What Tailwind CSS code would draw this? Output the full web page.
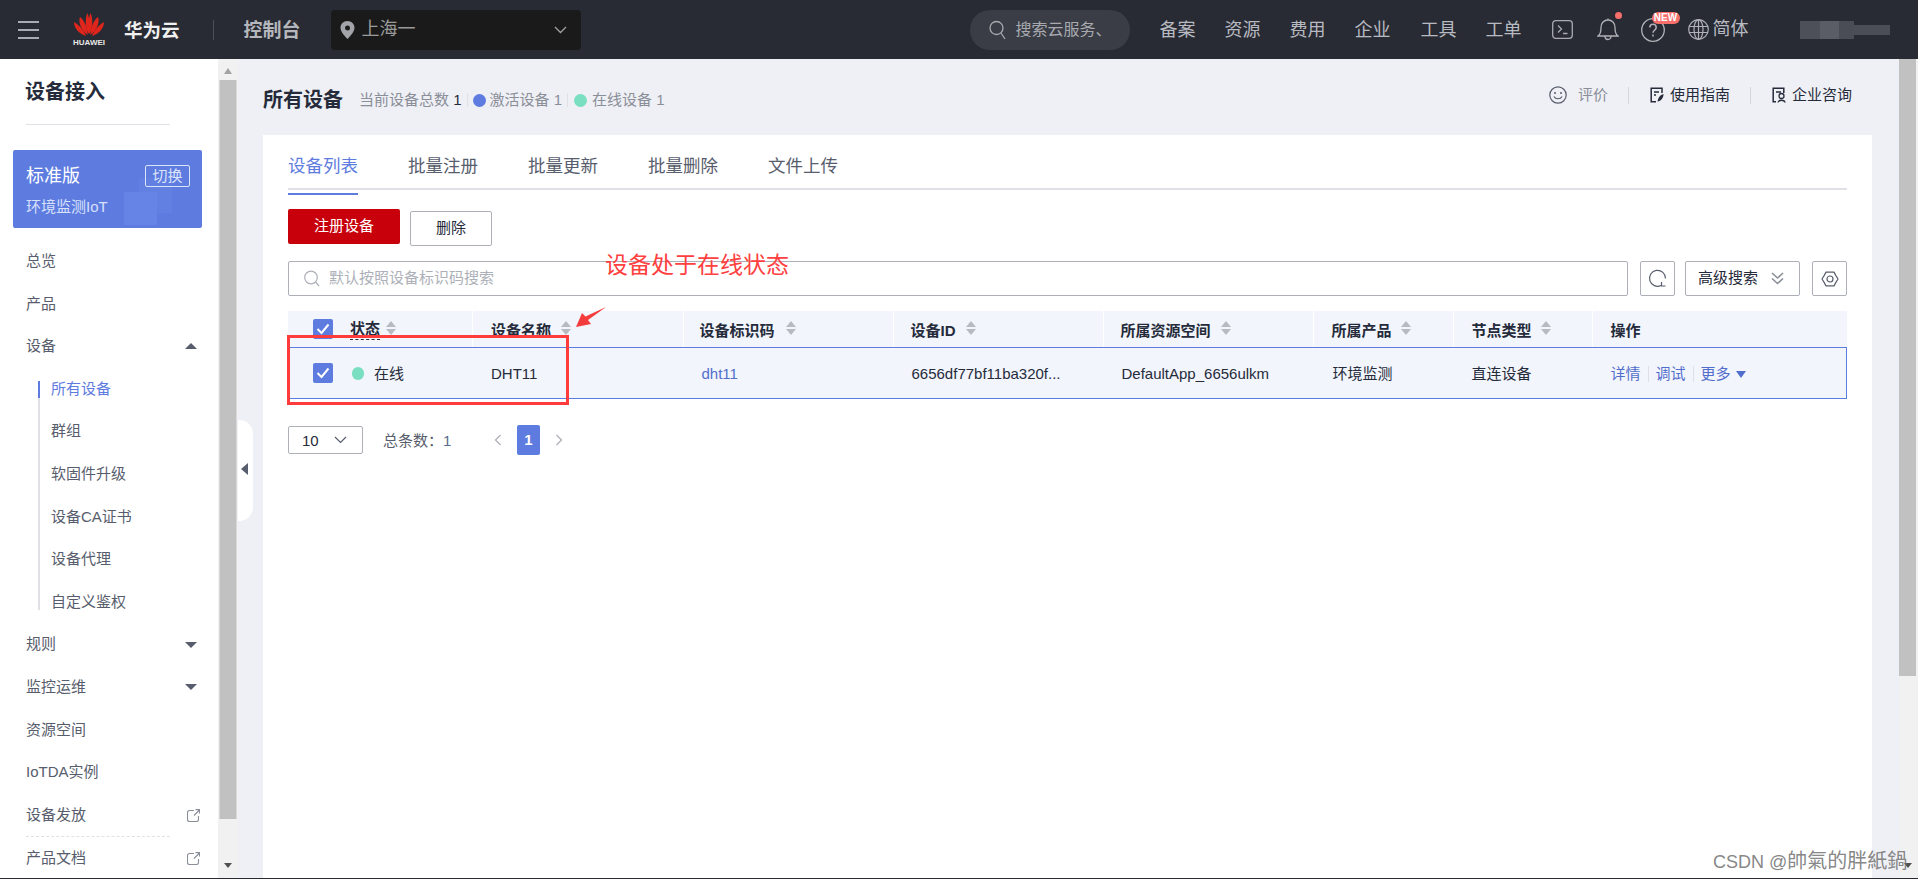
<!doctype html>
<html lang="zh">
<head>
<meta charset="utf-8">
<script src="https://cdn.jsdelivr.net/npm/@tailwindcss/browser@4"></script>
</head>
<body class="m-0 overflow-hidden bg-[#eff0f5] font-['Liberation_Sans','Noto_Sans_CJK_SC',sans-serif] text-[#252b3a]">
<div class="relative flex h-[879px] w-[1918px] flex-col overflow-hidden">
  <header class="flex h-[59px] shrink-0 items-center bg-[#282b33] text-[#b8bac1]">
    <div class="ml-[18px] flex h-[18px] w-[21px] flex-col justify-between">
      <span class="h-[2px] bg-[#a9abb2]"></span><span class="h-[2px] bg-[#a9abb2]"></span><span class="h-[2px] bg-[#a9abb2]"></span>
    </div>
    <div class="ml-[34px] flex w-[32px] flex-col items-center">
      <svg width="32" height="25" viewBox="0 0 32 25"><g fill="#e0261c"><path d="M13 24 C6 22 1 16 1 10 C5 12 11 18 13 24Z"/><path d="M14.5 23 C8 18 5 10 7 5 C11 8 15 16 14.5 23Z"/><path d="M15.6 22 C12 15 12 6 14.5 1 C16 5 18 14 15.6 22Z"/><path d="M16.4 22 C14 14 16 5 17.5 1 C20 6 20 15 16.4 22Z"/><path d="M17.5 23 C17 16 21 8 25 5 C27 10 24 18 17.5 23Z"/><path d="M19 24 C21 18 27 12 31 10 C31 16 26 22 19 24Z"/></g></svg>
      <span class="mt-[2px] text-[8px] leading-[8px] font-bold whitespace-nowrap text-[#e8e8e8]">HUAWEI</span>
    </div>
    <span class="ml-[19px] pt-[2px] text-[18.5px] font-bold text-[#f0f0f0]">华为云</span>
    <span class="ml-[33px] h-[20px] w-px bg-[#4c4f57]"></span>
    <span class="ml-[30px] pt-[3px] text-[19px] font-bold text-[#b5b7bd]">控制台</span>
    <div class="ml-[30px] flex h-[40px] w-[250px] items-center rounded bg-[#1a1a1a] pl-[9px] pr-[14px]">
      <svg width="15" height="18" viewBox="0 0 15 18"><path fill="#a2a4aa" fill-rule="evenodd" d="M7.5 0C3.4 0 .5 3 .5 6.8c0 4 4.5 8.7 7 11.2 2.5-2.5 7-7.2 7-11.2C14.5 3 11.6 0 7.5 0Zm0 4.5a2.5 2.5 0 1 1 0 5 2.5 2.5 0 0 1 0-5Z"/></svg>
      <span class="ml-[7px] flex-1 text-[18px] text-[#9a9a9a]">上海一</span>
      <svg width="13" height="8" viewBox="0 0 13 8"><path d="M1 1l5.5 5.5L12 1" fill="none" stroke="#a0a0a0" stroke-width="1.3"/></svg>
    </div>
    <div class="ml-[389px] flex h-[40px] w-[160px] items-center rounded-full bg-[#3a3d45] pl-[19px]">
      <svg width="17" height="20" viewBox="0 0 17 20"><circle cx="7.5" cy="8" r="6.5" fill="none" stroke="#a8aab0" stroke-width="1.3"/><path d="M12 13l4 6" stroke="#a8aab0" stroke-width="1.3"/></svg>
      <span class="ml-[10px] text-[16px] whitespace-nowrap text-[#a8aab0]">搜索云服务、</span>
    </div>
    <nav class="ml-[30px] flex gap-[29px] pt-[2px] text-[18px] whitespace-nowrap text-[#b8bac1]">
      <span class="w-[36px]">备案</span><span class="w-[36px]">资源</span><span class="w-[36px]">费用</span><span class="w-[37px]">企业</span><span class="w-[36px]">工具</span><span class="w-[36px]">工单</span>
    </nav>
    <svg class="ml-[30px]" width="21" height="19" viewBox="0 0 21 19"><rect x=".7" y=".7" width="19.6" height="17.6" rx="3" fill="none" stroke="#a8aab0" stroke-width="1.3"/><path d="M6 5.5l3.500 3.500L6 12.500M11 13.500h4.500" fill="none" stroke="#a8aab0" stroke-width="1.3"/></svg>
    <div class="relative ml-[24px] h-[23px] w-[22px]">
      <svg width="22" height="23" viewBox="0 0 22 23"><path d="M1 18c2.500-1.500 3-4 3-8.500C4 5 7 2 11 2s7 3 7 7.500c0 4.500.5 7 3 8.500ZM11 2V.5M8 18.500a3 3 0 0 0 6 0" fill="none" stroke="#b0b2b8" stroke-width="1.3"/></svg>
      <span class="absolute -top-[6px] left-[18px] h-[7px] w-[7px] rounded-full bg-[#f66f6a]"></span>
    </div>
    <div class="relative ml-[22px] h-[24px] w-[24px]">
      <svg width="24" height="24" viewBox="0 0 24 24"><circle cx="12" cy="12" r="11.3" fill="none" stroke="#b0b2b8" stroke-width="1.3"/><path d="M8.800 9.500c0-4.300 6.400-4.300 6.400 0 0 2.700-3.200 2.700-3.200 5.300M12 16.500v2" fill="none" stroke="#b0b2b8" stroke-width="1.5"/></svg>
      <span class="absolute -top-[6px] left-[11px] flex h-[12px] w-[28px] items-center justify-center rounded-[6px] bg-[#f66f6a] text-[10px] leading-none font-bold text-white">NEW</span>
    </div>
    <svg class="ml-[23px]" width="21" height="21" viewBox="0 0 21 21"><g fill="none" stroke="#b0b2b8" stroke-width="1.2"><circle cx="10.5" cy="10.5" r="9.8"/><ellipse cx="10.5" cy="10.5" rx="4.5" ry="9.8"/><path d="M1 7.500h19M1 13.500h19M10.500 1v19"/></g></svg>
    <span class="ml-[4px] text-[18px] text-[#b8bac1]">简体</span>
    <div class="ml-[51px] flex h-[28px] items-center">
      <span class="h-[18px] w-[20px] bg-[#4d5058]"></span>
      <span class="h-[18px] w-[19px] bg-[#5a5d65]"></span>
      <span class="h-[18px] w-[15px] bg-[#4a4d55]"></span>
      <span class="h-[10px] w-[36px] bg-[#4b4e56]"></span>
    </div>
  </header>

  <div class="flex min-h-0 flex-1">
    <aside class="w-[218px] shrink-0 overflow-hidden bg-white text-[15px] text-[#575d6c]">
      <div class="ml-[25px] mt-[21px] text-[20px] leading-[24px] font-bold text-[#252b3a]">设备接入</div>
      <div class="ml-[26px] mt-[20px] h-px w-[144px] bg-[#dfe1e6]"></div>
      <div class="relative ml-[13px] mt-[25px] h-[78px] w-[189px] overflow-hidden rounded-[2px] bg-[#5e7ce0] px-[13px]">
        <div class="absolute left-[126px] top-[28px] h-[35px] w-[33px] bg-[#627fe2]"></div>
        <div class="absolute left-[111px] top-[42px] h-[33px] w-[33px] bg-[#6684e6]"></div>
        <div class="relative flex items-center justify-between pt-[14px]">
          <span class="text-[18px] leading-[24px] text-white">标准版</span>
          <span class="-mr-[1px] flex h-[22px] w-[45px] items-center justify-center rounded-[2px] border border-[#dbe3fa] text-[15px] text-[#dbe3fa]">切换</span>
        </div>
        <div class="relative mt-[9px] text-[15px] leading-[20px] text-[#d8e0fa]">环境监测IoT</div>
      </div>
      <ul class="mt-[12px]">
        <li class="flex h-[42.6px] items-center pl-[26px]">总览</li>
        <li class="flex h-[42.6px] items-center pl-[26px]">产品</li>
        <li class="flex h-[42.6px] items-center justify-between pl-[26px] pr-[21px]">设备<span class="h-0 w-0 border-x-[6px] border-b-[6px] border-x-transparent border-b-[#575d6c]"></span></li>
        <li>
          <ul class="relative pl-[51px]">
            <span class="absolute left-[38px] top-[13px] bottom-[13px] w-[2px] bg-[#dfe1e6]"></span>
            <span class="absolute left-[38px] top-[13px] h-[17px] w-[2px] bg-[#5e7ce0]"></span>
            <li class="flex h-[42.6px] items-center text-[#5e7ce0]">所有设备</li>
            <li class="flex h-[42.6px] items-center">群组</li>
            <li class="flex h-[42.6px] items-center">软固件升级</li>
            <li class="flex h-[42.6px] items-center">设备CA证书</li>
            <li class="flex h-[42.6px] items-center">设备代理</li>
            <li class="flex h-[42.6px] items-center">自定义鉴权</li>
          </ul>
        </li>
        <li class="flex h-[42.6px] items-center justify-between pl-[26px] pr-[21px]">规则<span class="h-0 w-0 border-x-[6px] border-t-[6px] border-x-transparent border-t-[#575d6c]"></span></li>
        <li class="flex h-[42.6px] items-center justify-between pl-[26px] pr-[21px]">监控运维<span class="h-0 w-0 border-x-[6px] border-t-[6px] border-x-transparent border-t-[#575d6c]"></span></li>
        <li class="flex h-[42.6px] items-center pl-[26px]">资源空间</li>
        <li class="flex h-[42.6px] items-center pl-[26px]">IoTDA实例</li>
        <li class="flex h-[42.6px] items-center justify-between pl-[26px] pr-[18px]">设备发放
          <svg width="13" height="13" viewBox="0 0 13 13"><path d="M7 1.500H2.500a2 2 0 0 0-2 2v7a2 2 0 0 0 2 2h7a2 2 0 0 0 2-2V7M7 6.500l5.500-5.500M8.500.6h4v4" fill="none" stroke="#8a8e99" stroke-width="1.1"/></svg>
        </li>
        <li class="ml-[26px] h-0 w-[144px] border-t border-dashed border-[#dfe1e6]"></li>
        <li class="flex h-[42.6px] items-center justify-between pl-[26px] pr-[18px]">产品文档
          <svg width="13" height="13" viewBox="0 0 13 13"><path d="M7 1.500H2.500a2 2 0 0 0-2 2v7a2 2 0 0 0 2 2h7a2 2 0 0 0 2-2V7M7 6.500l5.500-5.500M8.500.6h4v4" fill="none" stroke="#8a8e99" stroke-width="1.1"/></svg>
        </li>
      </ul>
    </aside>

    <div class="flex w-[20px] shrink-0 flex-col items-center bg-[#f1f1f1]">
      <span class="mt-[9px] h-0 w-0 border-x-[4.5px] border-b-[6px] border-x-transparent border-b-[#a3a3a3]"></span>
      <span class="mt-[6px] h-[739px] w-[17px] -translate-x-[0.5px] bg-[#c1c1c1]"></span>
      <span class="mt-[44px] h-0 w-0 border-x-[4.5px] border-t-[5px] border-x-transparent border-t-[#505050]"></span>
    </div>

    <main class="relative min-w-0 flex-1">
      <div class="absolute left-0 top-[361px] flex h-[101px] w-[15px] items-center justify-start rounded-r-[14px] bg-white pb-[4px] pl-[3px]">
        <span class="h-0 w-0 border-y-[6px] border-r-[7px] border-y-transparent border-r-[#575d6c]"></span>
      </div>

      <div class="flex h-[76px] items-start pl-[25px] pr-[47px] pt-[27px]">
        <span class="text-[20px] leading-[28px] font-bold">所有设备</span>
        <div class="ml-[16px] flex h-[28px] items-center text-[15px] text-[#8a8e99]">
          <span class="whitespace-nowrap">当前设备总数 <span class="text-[#252b3a]">1</span></span>
          <span class="ml-[5px] h-[14px] w-px bg-[#dfe1e6]"></span>
          <span class="ml-[5px] h-[13px] w-[13px] rounded-full bg-[#5e7ce0]"></span>
          <span class="ml-[4px] whitespace-nowrap">激活设备 1</span>
          <span class="ml-[5px] h-[14px] w-px bg-[#dfe1e6]"></span>
          <span class="ml-[6px] h-[13px] w-[13px] rounded-full bg-[#7adfc0]"></span>
          <span class="ml-[5px] whitespace-nowrap">在线设备 1</span>
        </div>
        <div class="ml-auto -mt-[5px] flex h-[28px] items-center text-[15px]">
          <svg width="18" height="18" viewBox="0 0 18 18"><g fill="none" stroke="#575d6c" stroke-width="1.2"><circle cx="9" cy="9" r="8.2"/><path d="M5 10.500c1.500 3 6.500 3 8 0"/></g><circle cx="6" cy="7" r="1" fill="#575d6c"/><circle cx="12" cy="7" r="1" fill="#575d6c"/></svg>
          <span class="ml-[11px] text-[#8a8e99]">评价</span>
          <span class="ml-[20px] h-[17px] w-px bg-[#d4d6dc]"></span>
          <svg class="ml-[21px]" width="14" height="16" viewBox="0 0 14 16"><path d="M12 6V1.200H1.200v13.600H6M4 5h5M4 8h2" fill="none" stroke="#252b3a" stroke-width="1.5"/><path d="M13.500 7c0 4-2.500 7-6 7.500C8 11 10 8 13.500 7Z" fill="#252b3a"/></svg>
          <span class="ml-[6px]">使用指南</span>
          <span class="ml-[20px] h-[17px] w-px bg-[#d4d6dc]"></span>
          <svg class="ml-[21px]" width="14" height="16" viewBox="0 0 14 16"><path d="M4 14.800H1.200V1.200h10.600V6M4 5h5" fill="none" stroke="#252b3a" stroke-width="1.5"/><circle cx="9.500" cy="9" r="2.500" fill="none" stroke="#252b3a" stroke-width="1.3"/><path d="M6 15.500c.5-3 6.500-3 7 0" fill="none" stroke="#252b3a" stroke-width="1.3"/></svg>
          <span class="ml-[6px]">企业咨询</span>
        </div>
      </div>

      <section class="ml-[25px] h-[743px] w-[1609px] bg-white pl-[25px] pr-[25px] text-[15px]">
        <div class="relative flex h-[55px] items-center gap-[50px] border-b-2 border-[#dfe1e6] pt-[10px] text-[17.5px] text-[#575d6c]">
          <span class="relative w-[70px] whitespace-nowrap text-[#5e7ce0]">设备列表<span class="absolute left-0 right-0 -bottom-[15px] h-[2px] bg-[#5e7ce0]"></span></span>
          <span class="w-[70px] whitespace-nowrap">批量注册</span>
          <span class="w-[70px] whitespace-nowrap">批量更新</span>
          <span class="w-[70px] whitespace-nowrap">批量删除</span>
          <span class="w-[70px] whitespace-nowrap">文件上传</span>
        </div>
        <div class="mt-[19px] flex h-[37px] items-start gap-[10px]">
          <button class="h-[35px] w-[112px] rounded-[2px] bg-[#c7000b] text-[15px] text-white">注册设备</button>
          <button class="mt-[2px] h-[35px] w-[82px] rounded-[2px] border border-[#adb0b8] text-[15px]">删除</button>
        </div>
        <div class="mt-[15px] flex h-[35px] items-stretch">
          <div class="flex w-[1340px] items-center rounded-[2px] border border-[#adb0b8] pl-[15px]">
            <svg width="16" height="17" viewBox="0 0 16 17"><circle cx="7" cy="7.500" r="6.300" fill="none" stroke="#adb0b8" stroke-width="1.2"/><path d="M11.500 12l3.500 4" stroke="#adb0b8" stroke-width="1.2"/></svg>
            <span class="ml-[9px] text-[15px] text-[#adb0b8]">默认按照设备标识码搜索</span>
          </div>
          <div class="ml-[12px] flex w-[35px] items-center justify-center rounded-[2px] border border-[#adb0b8]">
            <svg width="19" height="19" viewBox="0 0 19 19"><path d="M13 16.500A8 8 0 1 1 17.500 9.500" fill="none" stroke="#575d6c" stroke-width="1.2"/><path d="M13.500 13v4h4" fill="none" stroke="#575d6c" stroke-width="1.2"/></svg>
          </div>
          <div class="ml-[10px] flex w-[115px] items-center rounded-[2px] border border-[#adb0b8] pl-[12px] text-[15px]">
            高级搜索
            <svg class="ml-[13px]" width="13" height="13" viewBox="0 0 13 13"><path d="M1 1l5.500 5 5.500-5M1 6.500l5.500 5 5.500-5" fill="none" stroke="#8a8e99" stroke-width="1.6"/></svg>
          </div>
          <div class="ml-[12px] flex w-[35px] items-center justify-center rounded-[2px] border border-[#adb0b8]">
            <svg width="18" height="18" viewBox="0 0 18 18"><path d="M17 9 14.900 12.400 13 15.900 9 15.800 5 15.900 3.100 12.400 1 9 3.100 5.600 5 2.100 9 2.200 13 2.100 14.900 5.600Z" fill="none" stroke="#575d6c" stroke-width="1.2" stroke-linejoin="round"/><circle cx="9" cy="9" r="3" fill="none" stroke="#575d6c" stroke-width="1.2"/></svg>
          </div>
        </div>

        <div class="mt-[15px] flex h-[36px] bg-[#f2f5fc] font-bold">
          <div class="flex w-[185px] items-center border-r border-white pl-[25px]">
            <span class="flex h-[20px] w-[20px] items-center justify-center rounded-[2px] bg-[#5e7ce0]"><svg width="14" height="12" viewBox="0 0 14 12"><path d="M1.500 6l4 4 7-8.500" fill="none" stroke="#fff" stroke-width="2"/></svg></span>
            <span class="ml-[17px] border-b border-dashed border-[#252b3a] leading-[21px]">状态</span>
            <span class="ml-[6px] -mt-[2px] flex flex-col gap-[2px]"><i class="h-0 w-0 border-x-[5px] border-b-[6px] border-x-transparent border-b-[#b8bac2]"></i><i class="h-0 w-0 border-x-[5px] border-t-[6px] border-x-transparent border-t-[#b8bac2]"></i></span>
          </div>
          <div class="flex w-[210.5px] items-center border-r border-white pl-[18px]"><span class="pt-[4px]">设备名称</span><span class="ml-[10px] -mt-[2px] flex flex-col gap-[2px]"><i class="h-0 w-0 border-x-[5px] border-b-[6px] border-x-transparent border-b-[#b8bac2]"></i><i class="h-0 w-0 border-x-[5px] border-t-[6px] border-x-transparent border-t-[#b8bac2]"></i></span></div>
          <div class="flex w-[210px] items-center border-r border-white pl-[16px]"><span class="pt-[4px]">设备标识码</span><span class="ml-[11px] -mt-[2px] flex flex-col gap-[2px]"><i class="h-0 w-0 border-x-[5px] border-b-[6px] border-x-transparent border-b-[#b8bac2]"></i><i class="h-0 w-0 border-x-[5px] border-t-[6px] border-x-transparent border-t-[#b8bac2]"></i></span></div>
          <div class="flex w-[210px] items-center border-r border-white pl-[17px]"><span class="pt-[4px]">设备ID</span><span class="ml-[10px] -mt-[2px] flex flex-col gap-[2px]"><i class="h-0 w-0 border-x-[5px] border-b-[6px] border-x-transparent border-b-[#b8bac2]"></i><i class="h-0 w-0 border-x-[5px] border-t-[6px] border-x-transparent border-t-[#b8bac2]"></i></span></div>
          <div class="flex w-[210px] items-center border-r border-white pl-[17px]"><span class="pt-[4px]">所属资源空间</span><span class="ml-[10px] -mt-[2px] flex flex-col gap-[2px]"><i class="h-0 w-0 border-x-[5px] border-b-[6px] border-x-transparent border-b-[#b8bac2]"></i><i class="h-0 w-0 border-x-[5px] border-t-[6px] border-x-transparent border-t-[#b8bac2]"></i></span></div>
          <div class="flex w-[140px] items-center border-r border-white pl-[18px]"><span class="pt-[4px]">所属产品</span><span class="ml-[9px] -mt-[2px] flex flex-col gap-[2px]"><i class="h-0 w-0 border-x-[5px] border-b-[6px] border-x-transparent border-b-[#b8bac2]"></i><i class="h-0 w-0 border-x-[5px] border-t-[6px] border-x-transparent border-t-[#b8bac2]"></i></span></div>
          <div class="flex w-[139px] items-center border-r border-white pl-[18px]"><span class="pt-[4px]">节点类型</span><span class="ml-[9px] -mt-[2px] flex flex-col gap-[2px]"><i class="h-0 w-0 border-x-[5px] border-b-[6px] border-x-transparent border-b-[#b8bac2]"></i><i class="h-0 w-0 border-x-[5px] border-t-[6px] border-x-transparent border-t-[#b8bac2]"></i></span></div>
          <div class="flex flex-1 items-center pl-[18px]"><span class="pt-[4px]">操作</span></div>
        </div>
        <div class="flex h-[52px] items-center border border-[#5e7ce0] bg-[#f2f5fc]">
          <div class="flex w-[184px] items-center pl-[24px]">
            <span class="flex h-[20px] w-[20px] items-center justify-center rounded-[2px] bg-[#5e7ce0]"><svg width="14" height="12" viewBox="0 0 14 12"><path d="M1.500 6l4 4 7-8.500" fill="none" stroke="#fff" stroke-width="2"/></svg></span>
            <span class="ml-[19px] h-[13px] w-[12px] rounded-full bg-[#7adfc0]"></span>
            <span class="ml-[10px] pt-[2px]">在线</span>
          </div>
          <div class="w-[210.5px] pl-[18px] pt-[2px]">DHT11</div>
          <div class="w-[210px] pl-[18px] pt-[2px] text-[#526ecc]">dht11</div>
          <div class="w-[210px] pl-[18px] pt-[3px]">6656df77bf11ba320f...</div>
          <div class="w-[210px] pl-[18px] pt-[2px]">DefaultApp_6656ulkm</div>
          <div class="w-[140px] pl-[19px] pt-[2px]">环境监测</div>
          <div class="w-[139px] pl-[18px] pt-[2px]">直连设备</div>
          <div class="flex flex-1 items-center pl-[18px] pt-[2px] text-[#526ecc]">
            <span>详情</span><span class="mx-[7px] h-[16px] w-px bg-[#dfe1e6]"></span><span>调试</span><span class="mx-[7px] h-[16px] w-px bg-[#dfe1e6]"></span><span>更多</span><span class="ml-[5px] h-0 w-0 border-x-[5px] border-t-[7px] border-x-transparent border-t-[#526ecc]"></span>
          </div>
        </div>
        <div class="mt-[26px] flex items-center">
          <div class="flex h-[28px] w-[75px] items-center justify-between rounded-[2px] border border-[#adb0b8] pl-[13px] pr-[15px]"><span class="pt-[2px]">10</span><svg width="13" height="8" viewBox="0 0 13 8"><path d="M1 1l5.500 5.500L12 1" fill="none" stroke="#575d6c" stroke-width="1.2"/></svg></div>
          <span class="ml-[20px] w-[111px] pt-[2px] text-[#575d6c]">总条数：<span class="text-[#526e8c]">1</span></span>
          <svg width="8" height="12" viewBox="0 0 8 12"><path d="M6.500 1l-5 5 5 5" fill="none" stroke="#adb0b8" stroke-width="1.3"/></svg>
          <span class="ml-[15px] flex h-[30px] w-[23px] items-center justify-center rounded-[2px] bg-[#5e7ce0] font-bold text-white">1</span>
          <svg class="ml-[15px]" width="8" height="12" viewBox="0 0 8 12"><path d="M1.500 1l5 5-5 5" fill="none" stroke="#adb0b8" stroke-width="1.3"/></svg>
        </div>
      </section>
    </main>

    <div class="w-[19px] shrink-0 bg-[#f1f1f1]">
      <div class="h-[617px] w-[17px] bg-[#c1c1c1]"></div>
      <div class="ml-[5px] mt-[187px] h-0 w-0 border-x-[4.5px] border-t-[5px] border-x-transparent border-t-[#505050]"></div>
    </div>
  </div>
  <div class="h-[1px] shrink-0 bg-[#282b33]"></div>

  <!-- annotations drawn over the page -->
  <div class="absolute left-[287px] top-[335px] h-[70px] w-[282px] border-[3px] border-[#ff3b3b]"></div>
  <span class="absolute left-[605px] top-[250px] text-[23px] leading-[30px] whitespace-nowrap text-[#ff4040]">设备处于在线状态</span>
  <svg class="absolute left-[575px] top-[306px]" width="32" height="22" viewBox="0 0 32 22"><path d="M1 21L7 7l3.500 3.500L31 1 13 14l3 4Z" fill="#f43c3c"/></svg>
  <span class="absolute left-[1713px] top-[847px] font-['Liberation_Sans','Noto_Sans_CJK_TC',sans-serif] text-[18px] leading-[28px] whitespace-nowrap text-[#777]/90">CSDN @<span class="text-[20px]">帥氣的胖紙鍋</span></span>
</div>
</body>
</html>
